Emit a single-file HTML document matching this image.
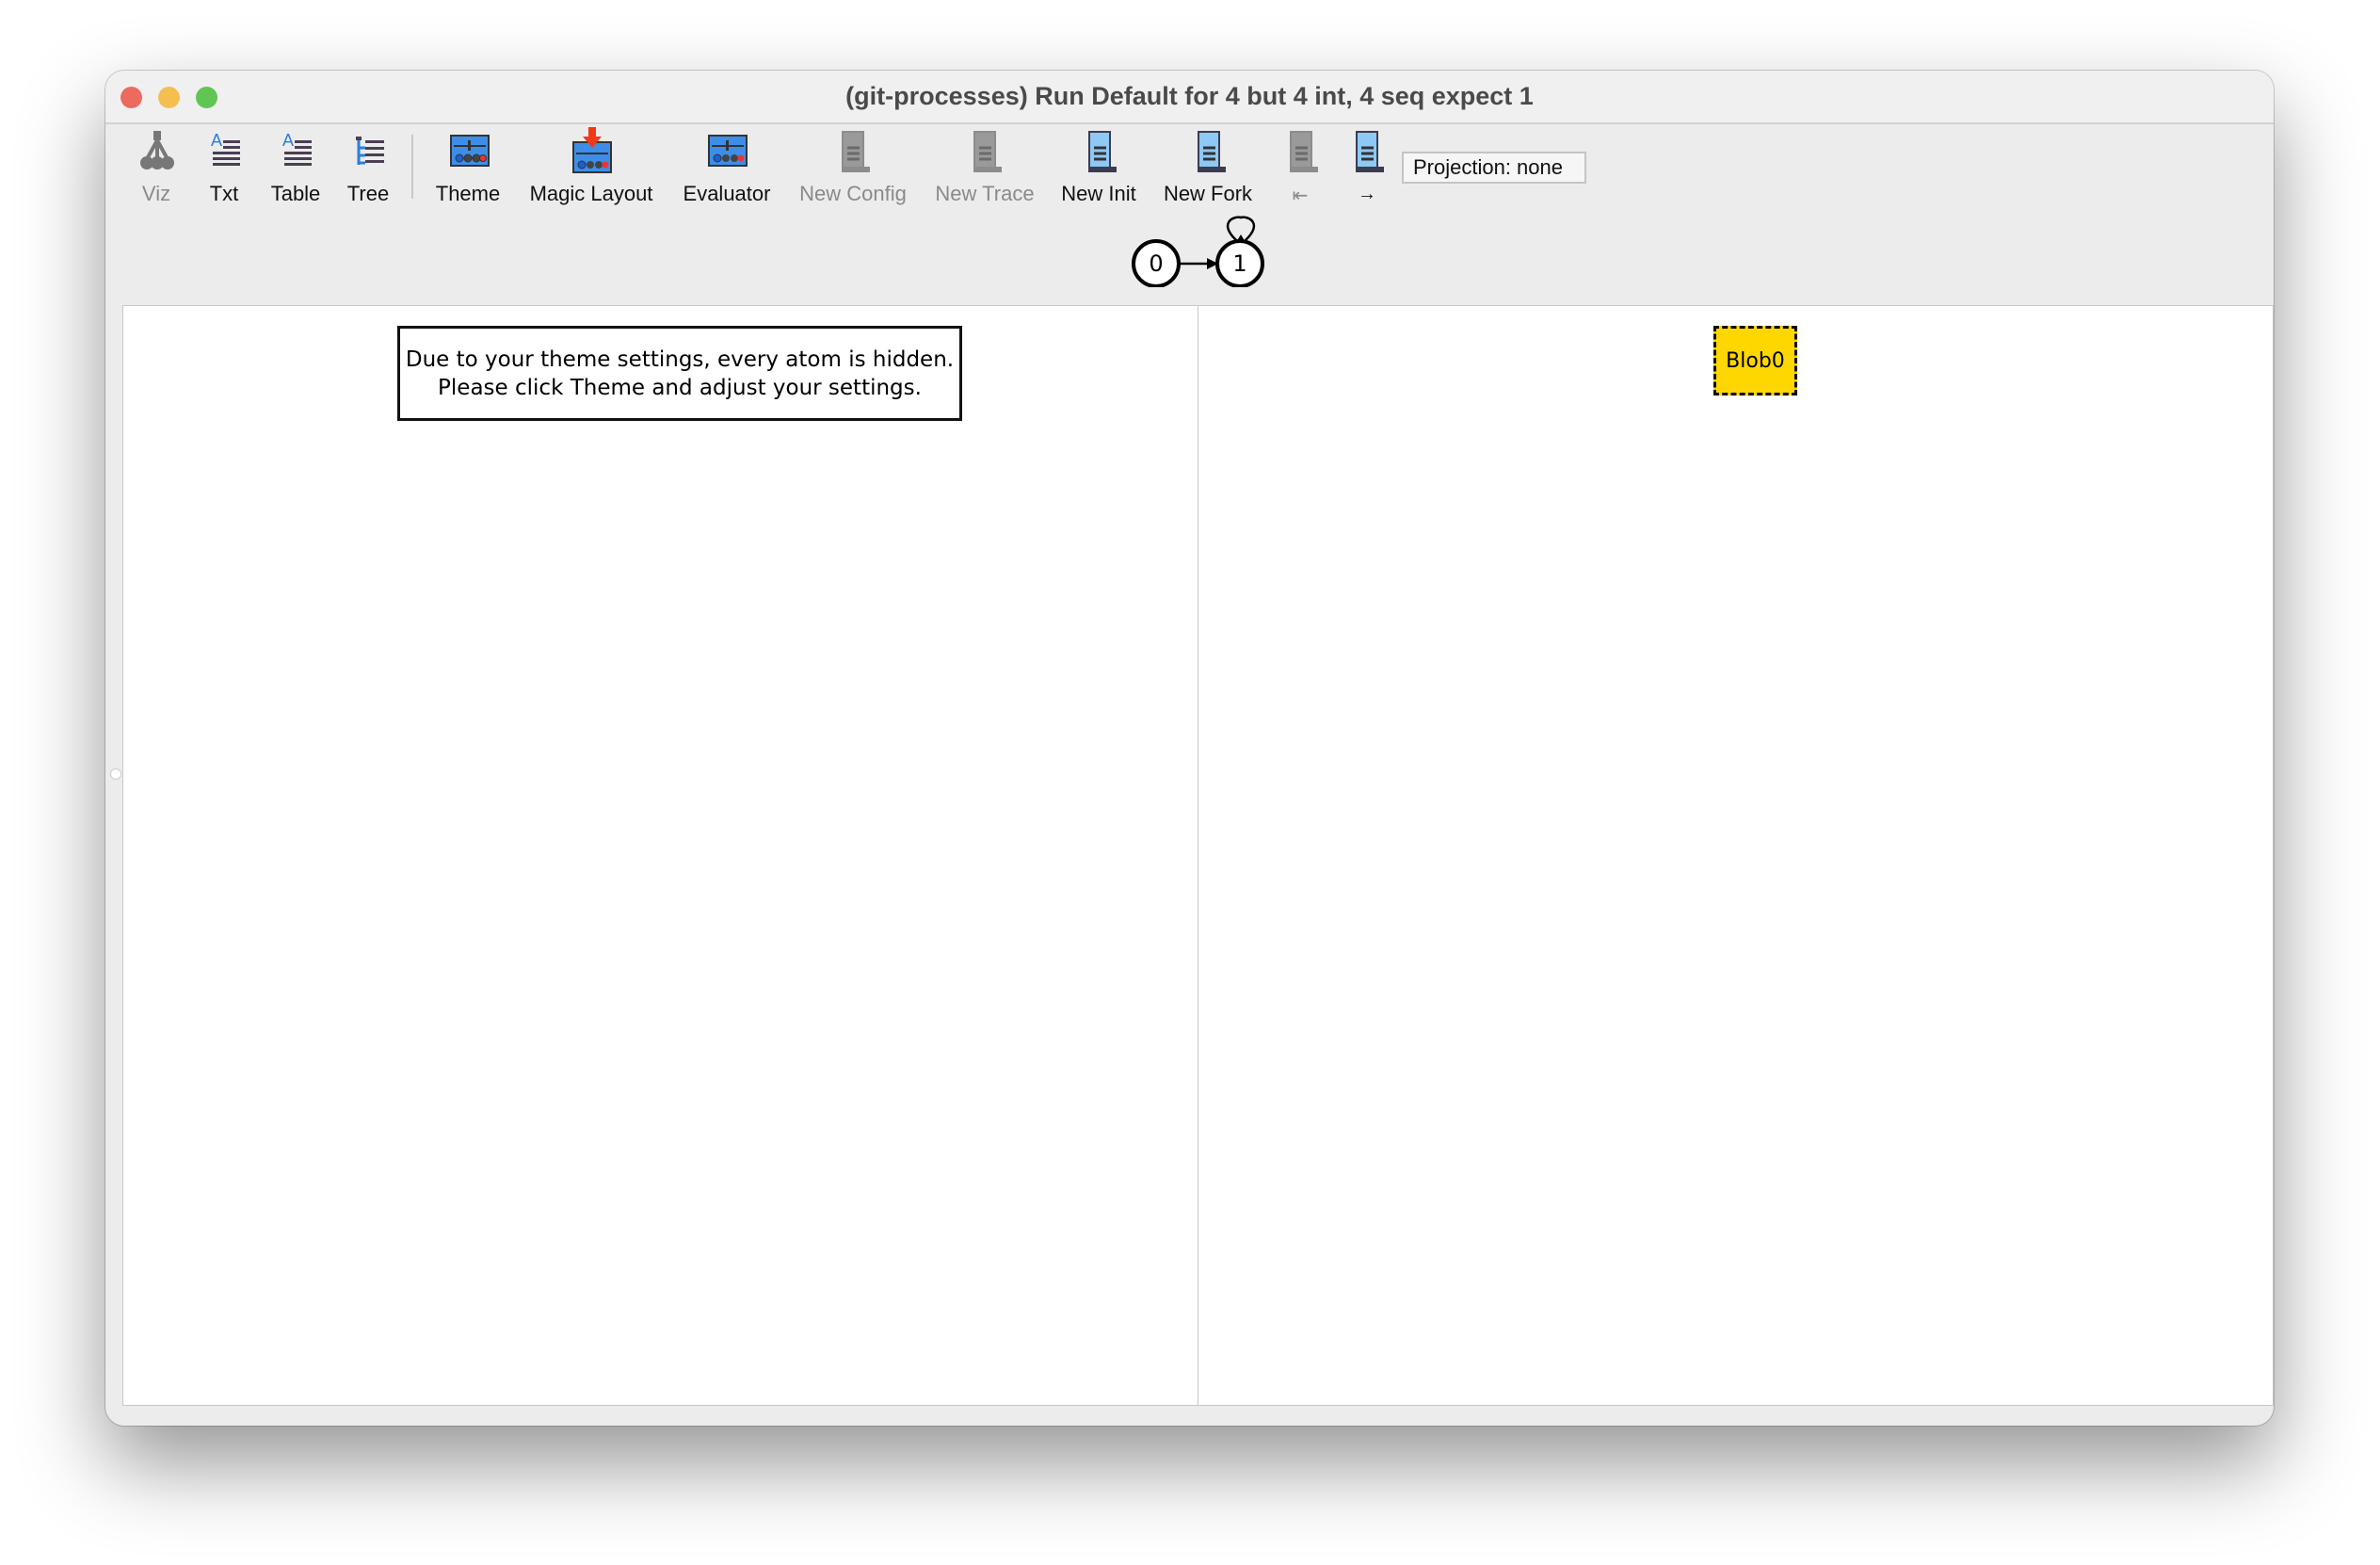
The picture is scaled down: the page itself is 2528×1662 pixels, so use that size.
<!DOCTYPE html>
<html><head><meta charset="utf-8"><style>
*{margin:0;padding:0;box-sizing:border-box}
body{width:2528px;height:1662px;background:#fff;position:relative;overflow:hidden;font-family:"Liberation Sans",sans-serif}
.win{position:absolute;left:112px;top:75px;width:2303px;height:1439px;background:#ececec;border-radius:20px;box-shadow:0 40px 90px rgba(0,0,0,0.42),0 0 0 1px rgba(0,0,0,0.18);overflow:hidden}
.tb{position:absolute;left:0;top:0;width:100%;height:57px;background:#f0f0f0;border-bottom:2px solid #d2d2d2}
.l{position:absolute;width:23px;height:23px;border-radius:50%;top:17px}
.title{position:absolute;left:0;width:100%;top:12px;text-align:center;font-weight:bold;font-size:27px;color:#4a4a4a}
.lab{position:absolute;top:118px;font-size:22px;color:#111;transform:translateX(-50%);white-space:nowrap}
.dis{color:#8a8a8a}
.ic{position:absolute}
.panel{position:absolute;top:249px;height:1169px;background:#fff;border:1px solid #c8c8c8}
</style></head><body>
<div class="win">
<div class="tb">
<div class="l" style="left:16px;background:#ed6a5e"></div>
<div class="l" style="left:56px;background:#f5bf4f"></div>
<div class="l" style="left:96px;background:#61c554"></div>
<div class="title">(git-processes) Run Default for 4 but 4 int, 4 seq expect 1</div>
</div>

<svg class="ic" style="left:34px;top:62px" width="42" height="48" viewBox="0 0 42 48"><rect x="17" y="2" width="8" height="10" fill="#777"/><path d="M21 12 L10 32 M21 12 L21 32 M21 12 L32 32" stroke="#777" stroke-width="4"/><circle cx="10" cy="36" r="7" fill="#777"/><circle cx="21" cy="36" r="7" fill="#777"/><circle cx="32" cy="36" r="7" fill="#777"/></svg>
<svg class="ic" style="left:110px;top:62px" width="36" height="48" viewBox="0 0 36 48"><text x="2" y="18" font-size="18" fill="#2a7de1" font-family="Liberation Sans">A</text><g fill="#4a3f55"><rect x="15" y="12" width="18" height="3"/><rect x="15" y="18" width="18" height="3"/><rect x="4" y="24" width="29" height="3"/><rect x="4" y="30" width="29" height="3"/><rect x="4" y="36" width="29" height="3"/></g></svg>
<svg class="ic" style="left:186px;top:62px" width="36" height="48" viewBox="0 0 36 48"><text x="2" y="18" font-size="18" fill="#2a7de1" font-family="Liberation Sans">A</text><g fill="#4a3f55"><rect x="15" y="12" width="18" height="3"/><rect x="15" y="18" width="18" height="3"/><rect x="4" y="24" width="29" height="3"/><rect x="4" y="30" width="29" height="3"/><rect x="4" y="36" width="29" height="3"/></g></svg>
<svg class="ic" style="left:262px;top:62px" width="36" height="48" viewBox="0 0 36 48"><path d="M7 10 V38 M7 20 H14 M7 28 H14 M7 36 H14" stroke="#2a7de1" stroke-width="3"/><g fill="#4a3f55"><rect x="4" y="8" width="6" height="4"/><rect x="14" y="12" width="20" height="3"/><rect x="14" y="19" width="20" height="3"/><rect x="14" y="26" width="20" height="3"/><rect x="14" y="33" width="20" height="3"/></g></svg>
<div style="position:absolute;left:325px;top:68px;width:2px;height:68px;background:#c8c8c8"></div>
<svg class="ic" style="left:366px;top:68px" width="42" height="34" viewBox="0 0 42 34"><rect x="1" y="1" width="40" height="32" fill="#3d8ee8" stroke="#333" stroke-width="2"/><path d="M4 12 H38" stroke="#333" stroke-width="2"/><rect x="19" y="6" width="3" height="11" fill="#333"/><circle cx="10" cy="25" r="4" fill="#1a5fd6" stroke="#333"/><circle cx="19" cy="25" r="4" fill="#444" stroke="#333"/><circle cx="28" cy="25" r="4" fill="#444" stroke="#333"/><circle cx="35" cy="25" r="3.5" fill="#e33" stroke="#333"/></svg>
<svg class="ic" style="left:496px;top:60px" width="42" height="50" viewBox="0 0 42 50"><rect x="1" y="16" width="40" height="32" fill="#3d8ee8" stroke="#333" stroke-width="2"/><path d="M4 28 H38" stroke="#333" stroke-width="2"/><circle cx="10" cy="40" r="4" fill="#1a5fd6" stroke="#333"/><circle cx="19" cy="40" r="4" fill="#444"/><circle cx="28" cy="40" r="4" fill="#444"/><circle cx="35" cy="40" r="3.5" fill="#e33"/><path d="M17 0 H25 V10 H31 L21 22 L11 10 H17Z" fill="#f03a17"/></svg>
<svg class="ic" style="left:640px;top:68px" width="42" height="34" viewBox="0 0 42 34"><rect x="1" y="1" width="40" height="32" fill="#3d8ee8" stroke="#333" stroke-width="2"/><path d="M4 12 H38" stroke="#333" stroke-width="2"/><rect x="19" y="6" width="3" height="11" fill="#333"/><circle cx="10" cy="25" r="4" fill="#1a5fd6" stroke="#333"/><circle cx="19" cy="25" r="4" fill="#444"/><circle cx="28" cy="25" r="4" fill="#444"/><circle cx="35" cy="25" r="3.5" fill="#e33"/></svg>
<svg class="ic" style="left:774px;top:62px" width="40" height="48" viewBox="0 0 40 48"><path d="M8 2 H32 V40 H38 V46 H8 Z" fill="#8c8c8c"/><rect x="10" y="4" width="20" height="36" fill="#9a9a9a"/><path d="M14 20 H27 M14 26 H27 M14 32 H27" stroke="#6a6a6a" stroke-width="3"/></svg>
<svg class="ic" style="left:914px;top:62px" width="40" height="48" viewBox="0 0 40 48"><path d="M8 2 H32 V40 H38 V46 H8 Z" fill="#8c8c8c"/><rect x="10" y="4" width="20" height="36" fill="#9a9a9a"/><path d="M14 20 H27 M14 26 H27 M14 32 H27" stroke="#6a6a6a" stroke-width="3"/></svg>
<svg class="ic" style="left:1036px;top:62px" width="40" height="48" viewBox="0 0 40 48"><path d="M8 2 H32 V40 H38 V46 H8 Z" fill="#3b3b52"/><rect x="10" y="4" width="20" height="36" fill="#8ec8f5"/><path d="M14 20 H27 M14 26 H27 M14 32 H27" stroke="#333" stroke-width="3"/></svg>
<svg class="ic" style="left:1152px;top:62px" width="40" height="48" viewBox="0 0 40 48"><path d="M8 2 H32 V40 H38 V46 H8 Z" fill="#3b3b52"/><rect x="10" y="4" width="20" height="36" fill="#8ec8f5"/><path d="M14 20 H27 M14 26 H27 M14 32 H27" stroke="#333" stroke-width="3"/></svg>
<svg class="ic" style="left:1250px;top:62px" width="40" height="48" viewBox="0 0 40 48"><path d="M8 2 H32 V40 H38 V46 H8 Z" fill="#8c8c8c"/><rect x="10" y="4" width="20" height="36" fill="#9a9a9a"/><path d="M14 20 H27 M14 26 H27 M14 32 H27" stroke="#6a6a6a" stroke-width="3"/></svg>
<svg class="ic" style="left:1320px;top:62px" width="40" height="48" viewBox="0 0 40 48"><path d="M8 2 H32 V40 H38 V46 H8 Z" fill="#3b3b52"/><rect x="10" y="4" width="20" height="36" fill="#8ec8f5"/><path d="M14 20 H27 M14 26 H27 M14 32 H27" stroke="#333" stroke-width="3"/></svg>

<div class="lab dis" style="left:54px">Viz</div>
<div class="lab" style="left:126px">Txt</div>
<div class="lab" style="left:202px">Table</div>
<div class="lab" style="left:279px">Tree</div>
<div class="lab" style="left:385px">Theme</div>
<div class="lab" style="left:516px">Magic Layout</div>
<div class="lab" style="left:660px">Evaluator</div>
<div class="lab dis" style="left:794px">New Config</div>
<div class="lab dis" style="left:934px">New Trace</div>
<div class="lab" style="left:1055px">New Init</div>
<div class="lab" style="left:1171px">New Fork</div>
<div class="lab dis" style="left:1269px;font-size:20px;top:120px">⇤</div>
<div class="lab" style="left:1340px;font-size:20px;top:120px">→</div>
<div style="position:absolute;left:1377px;top:86px;width:196px;height:34px;border:2px solid #c4c4c4;background:#f6f6f6;font-size:22px;line-height:30px;padding-left:10px;color:#111">Projection: none</div>

<svg class="ic" style="left:1080px;top:150px" width="160" height="80" viewBox="0 0 160 80"><path d="M121 30 C102 12 118 4 126 6 C134 4 150 12 131 30" fill="none" stroke="#000" stroke-width="2.5"/><path d="M126 24 L120 34 L132 34Z" fill="#000"/><circle cx="36" cy="55" r="24" fill="#fff" stroke="#000" stroke-width="4"/><circle cx="125" cy="55" r="24" fill="#fff" stroke="#000" stroke-width="4"/><path d="M60 55 H92" stroke="#000" stroke-width="2.5"/><path d="M90 49 L102 55 L90 61Z" fill="#000"/><text x="36" y="63" text-anchor="middle" font-size="24" font-family="DejaVu Sans">0</text><text x="125" y="63" text-anchor="middle" font-size="24" font-family="DejaVu Sans">1</text></svg>

<div class="panel" style="left:18px;width:1143px"></div>
<div class="panel" style="left:1160px;width:1143px"></div>
<div style="position:absolute;left:5px;top:741px;width:12px;height:12px;border-radius:50%;background:#fff;border:1px solid #ccc"></div>
<div style="position:absolute;left:310px;top:271px;width:600px;height:101px;border:3px solid #111;background:#fff;font-family:'DejaVu Sans',sans-serif;font-size:23px;text-align:center;line-height:30px;padding-top:18px;color:#000;white-space:nowrap">Due to your theme settings, every atom is hidden.<br>Please click Theme and adjust your settings.</div>
<div style="position:absolute;left:1708px;top:271px;width:89px;height:74px;border:3px dashed #000;background:#ffd700;font-family:'DejaVu Sans',sans-serif;font-size:22px;text-align:center;line-height:70px;color:#000">Blob0</div>
</div>
</body></html>
